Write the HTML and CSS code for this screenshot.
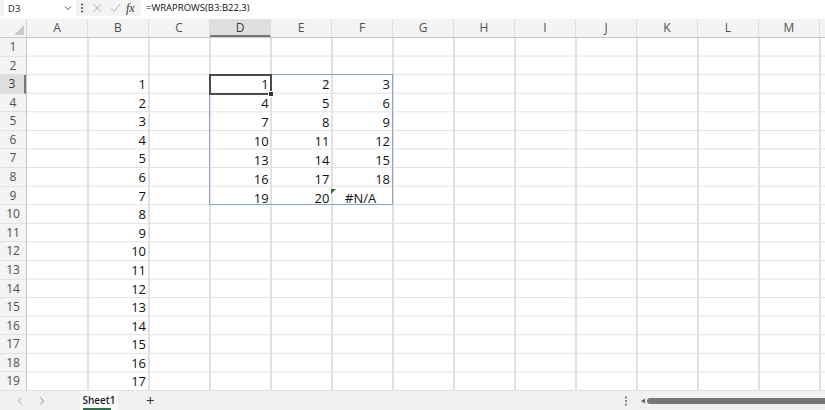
FILE: index.html
```html
<!DOCTYPE html>
<html>
<head>
<meta charset="utf-8">
<link rel="stylesheet" href="styles.css">
</head>
<body>
<div class="app">
  <div class="topbar">
    <div class="namebox">
      <span class="name">D3</span>
      <svg class="chev" width="8" height="6" viewBox="0 0 8 6"><path d="M1 1.5 L4 4.5 L7 1.5" fill="none" stroke="#555" stroke-width="1"/></svg>
    </div>
    <svg class="vdots" width="4" height="10" viewBox="0 0 4 10"><circle cx="2" cy="1.5" r="1" fill="#444"/><circle cx="2" cy="5" r="1" fill="#444"/><circle cx="2" cy="8.5" r="1" fill="#444"/></svg>
    <svg class="ico" width="10" height="10" viewBox="0 0 10 10"><path d="M1 1 L9 9 M9 1 L1 9" stroke="#b5b5b5" stroke-width="1" fill="none"/></svg>
    <svg class="ico" width="11" height="10" viewBox="0 0 11 10"><path d="M1 5.5 L4 8.5 L10 1" stroke="#b5b5b5" stroke-width="1" fill="none"/></svg>
    <span class="fx">fx</span>
    <div class="formula">=WRAPROWS(B3:B22,3)</div>
  </div>
  <div class="sheet">
    <div class="corner"><svg width="10" height="10" viewBox="0 0 10 10"><path d="M10 0 L10 10 L0 10 Z" fill="#c9c9c9"/></svg></div>
    <div class="colheads">
      <div class="ch">A</div><div class="ch">B</div><div class="ch">C</div><div class="ch sel">D</div><div class="ch">E</div><div class="ch">F</div><div class="ch">G</div><div class="ch">H</div><div class="ch">I</div><div class="ch">J</div><div class="ch">K</div><div class="ch">L</div><div class="ch">M</div><div class="ch rest"></div>
    </div>
    <div class="rowheads">
      <div class="rh">1</div><div class="rh">2</div><div class="rh sel">3</div><div class="rh">4</div><div class="rh">5</div><div class="rh">6</div><div class="rh">7</div><div class="rh">8</div><div class="rh">9</div><div class="rh">10</div><div class="rh">11</div><div class="rh">12</div><div class="rh">13</div><div class="rh">14</div><div class="rh">15</div><div class="rh">16</div><div class="rh">17</div><div class="rh">18</div><div class="rh">19</div>
    </div>
    <div class="cells">
      <div class="colB">
        <div class="c"></div><div class="c"></div><div class="c">1</div><div class="c">2</div><div class="c">3</div><div class="c">4</div><div class="c">5</div><div class="c">6</div><div class="c">7</div><div class="c">8</div><div class="c">9</div><div class="c">10</div><div class="c">11</div><div class="c">12</div><div class="c">13</div><div class="c">14</div><div class="c">15</div><div class="c">16</div><div class="c">17</div>
      </div>
      <div class="range">
        <div class="c active">1</div><div class="c">2</div><div class="c">3</div>
        <div class="c">4</div><div class="c">5</div><div class="c">6</div>
        <div class="c">7</div><div class="c">8</div><div class="c">9</div>
        <div class="c">10</div><div class="c">11</div><div class="c">12</div>
        <div class="c">13</div><div class="c">14</div><div class="c">15</div>
        <div class="c">16</div><div class="c">17</div><div class="c">18</div>
        <div class="c">19</div><div class="c">20</div><div class="c err">#N/A</div>
      </div>
    </div>
  </div>
  <div class="bottombar">
    <div class="nav">
      <svg width="6" height="8" viewBox="0 0 6 8"><path d="M4.5 0.5 L1.5 4 L4.5 7.5" fill="none" stroke="#b0b0b0" stroke-width="1"/></svg>
      <svg width="6" height="8" viewBox="0 0 6 8"><path d="M1.5 0.5 L4.5 4 L1.5 7.5" fill="none" stroke="#909090" stroke-width="1"/></svg>
    </div>
    <div class="tab">Sheet1</div>
    <div class="plus">+</div>
    <div class="spacer"></div>
    <svg class="bdots" width="4" height="10" viewBox="0 0 4 10"><circle cx="2" cy="1.5" r="0.9" fill="#555"/><circle cx="2" cy="5" r="0.9" fill="#555"/><circle cx="2" cy="8.5" r="0.9" fill="#555"/></svg>
    <div class="hscroll">
      <svg width="6" height="6" viewBox="0 0 6 6"><path d="M5 0.5 L1 3 L5 5.5 Z" fill="#606060"/></svg>
      <div class="thumb"></div>
    </div>
  </div>
</div>
</body>
</html>
```
FILE: styles.css
```css
* { box-sizing: border-box; }
html, body { margin: 0; padding: 0; }
body {
  width: 825px;
  height: 410px;
  overflow: hidden;
  background: #ffffff;
  font-family: "Open Sans", "Noto Sans", sans-serif;
  color: #000;
}
.app {
  display: flex;
  flex-direction: column;
  width: 825px;
  height: 410px;
  overflow: hidden;
}
.topbar {
  height: 16px;
  display: flex;
  align-items: center;
  background: #f3f3f3;
  flex: none;
}
.namebox {
  width: 72px;
  height: 16px;
  margin-left: 4px;
  background: #ffffff;
  display: flex;
  align-items: center;
  justify-content: space-between;
  padding: 0 4px 0 4px;
}
.name { font-size: 9.5px; color: #222; }
.vdots { margin-left: 4px; }
.ico { margin-left: 8px; }
.fx {
  margin-left: 5px;
  font-family: "Liberation Serif", serif;
  font-style: italic;
  font-size: 12px;
  color: #333;
  width: 15px;
}
.formula {
  flex: 1;
  min-width: 0;
  height: 16px;
  margin-left: 0;
  background: #ffffff;
  font-size: 9.5px;
  line-height: 16px;
  padding-left: 5px;
  color: #111;
}
.sheet {
  margin-top: 3px;
  flex: none;
  display: grid;
  grid-template-columns: 27px minmax(0, 1fr);
  grid-template-rows: 19px 353px;
  background: #ffffff;
  overflow: hidden;
}
.corner {
  background: #f4f4f4;
  border-right: 1px solid #d4d4d4;
  border-bottom: 1px solid #c8c8c8;
  display: flex;
  align-items: flex-end;
  justify-content: flex-end;
  padding: 0 2px 2px 0;
}
.colheads {
  display: flex;
  background: #f4f4f4;
  border-bottom: 1px solid #c8c8c8;
  overflow: hidden;
}
.ch {
  width: 61px;
  flex: none;
  border-right: 1px solid #dedede;
  font-size: 12px;
  color: #505050;
  text-align: center;
  line-height: 18px;
}
.ch.sel {
  background: #dedede;
  border-bottom: 2px solid #6e7a72;
  color: #3a3a3a;
}
.ch.rest { flex: 1; border-right: none; }
.rowheads {
  display: flex;
  flex-direction: column;
  background: #f4f4f4;
  border-right: 1px solid #c8c8c8;
}
.rh {
  height: 18.58px;
  flex: none;
  border-bottom: 1px solid #e2e2e2;
  font-size: 12px;
  color: #505050;
  text-align: center;
  line-height: 18px;
}
.rh.sel {
  background: #dedede;
  border-right: 2px solid #6e7a72;
  color: #3a3a3a;
}
.cells {
  display: grid;
  grid-template-columns: repeat(13, 61px) minmax(0, 1fr);
  grid-template-rows: repeat(19, 18.58px);
  overflow: hidden;
  background-image:
    linear-gradient(to left, #e1e1e1 1px, transparent 1px),
    linear-gradient(to top, #e1e1e1 1px, transparent 1px);
  background-size: 61px 18.58px;
}
.colB {
  grid-column: 2;
  grid-row: 1 / -1;
  display: flex;
  flex-direction: column;
}
.c {
  height: 18.58px;
  font-size: 13px;
  line-height: 19px;
  text-align: right;
  padding-right: 3px;
  color: #111;
}
.range {
  grid-column: 4 / 7;
  grid-row: 3 / 10;
  margin: -1px 0 0 -1px;
  display: grid;
  grid-template-columns: repeat(3, 1fr);
  grid-template-rows: repeat(7, 1fr);
  border: 1px solid #8ea2c4;
  background: transparent;
}
.range .c { height: auto; padding-right: 2px; }
.active { position: relative; }
.active::after {
  content: "";
  position: absolute;
  left: -1px;
  top: -1px;
  right: -1px;
  bottom: -1px;
  border: 2px solid #474d49;
}
.active::before {
  content: "";
  position: absolute;
  right: -3px;
  bottom: -3px;
  width: 4px;
  height: 4px;
  background: #2f3a33;
  border: 1px solid #ffffff;
  z-index: 2;
}
.err {
  position: relative;
  text-align: center;
  padding-right: 0;
}
.err::before {
  content: "";
  position: absolute;
  left: 0;
  top: 0;
  border-top: 5px solid #1f7a3a;
  border-right: 5px solid transparent;
}
.bottombar {
  flex: 1;
  display: flex;
  align-items: center;
  background: #f0f0f0;
}
.nav {
  width: 80px;
  display: flex;
  gap: 16px;
  padding-left: 17px;
}
.tab {
  width: 38px;
  height: 19px;
  background: #fafafa;
  font-size: 10px;
  font-weight: 600;
  color: #1e1e1e;
  text-align: center;
  line-height: 18px;
  position: relative;
}
.tab::after {
  content: "";
  position: absolute;
  left: 3px;
  right: 7px;
  bottom: 0;
  height: 2px;
  background: #2a7148;
}
.plus {
  margin-left: 28px;
  font-size: 15px;
  color: #333;
  line-height: 19px;
}
.spacer { flex: 1; }
.bdots { margin-right: 12px; }
.hscroll {
  width: 185px;
  display: flex;
  align-items: center;
  gap: 1px;
}
.thumb {
  flex: 1;
  height: 6px;
  border-radius: 3px 0 0 3px;
  background: #767676;
}
```
